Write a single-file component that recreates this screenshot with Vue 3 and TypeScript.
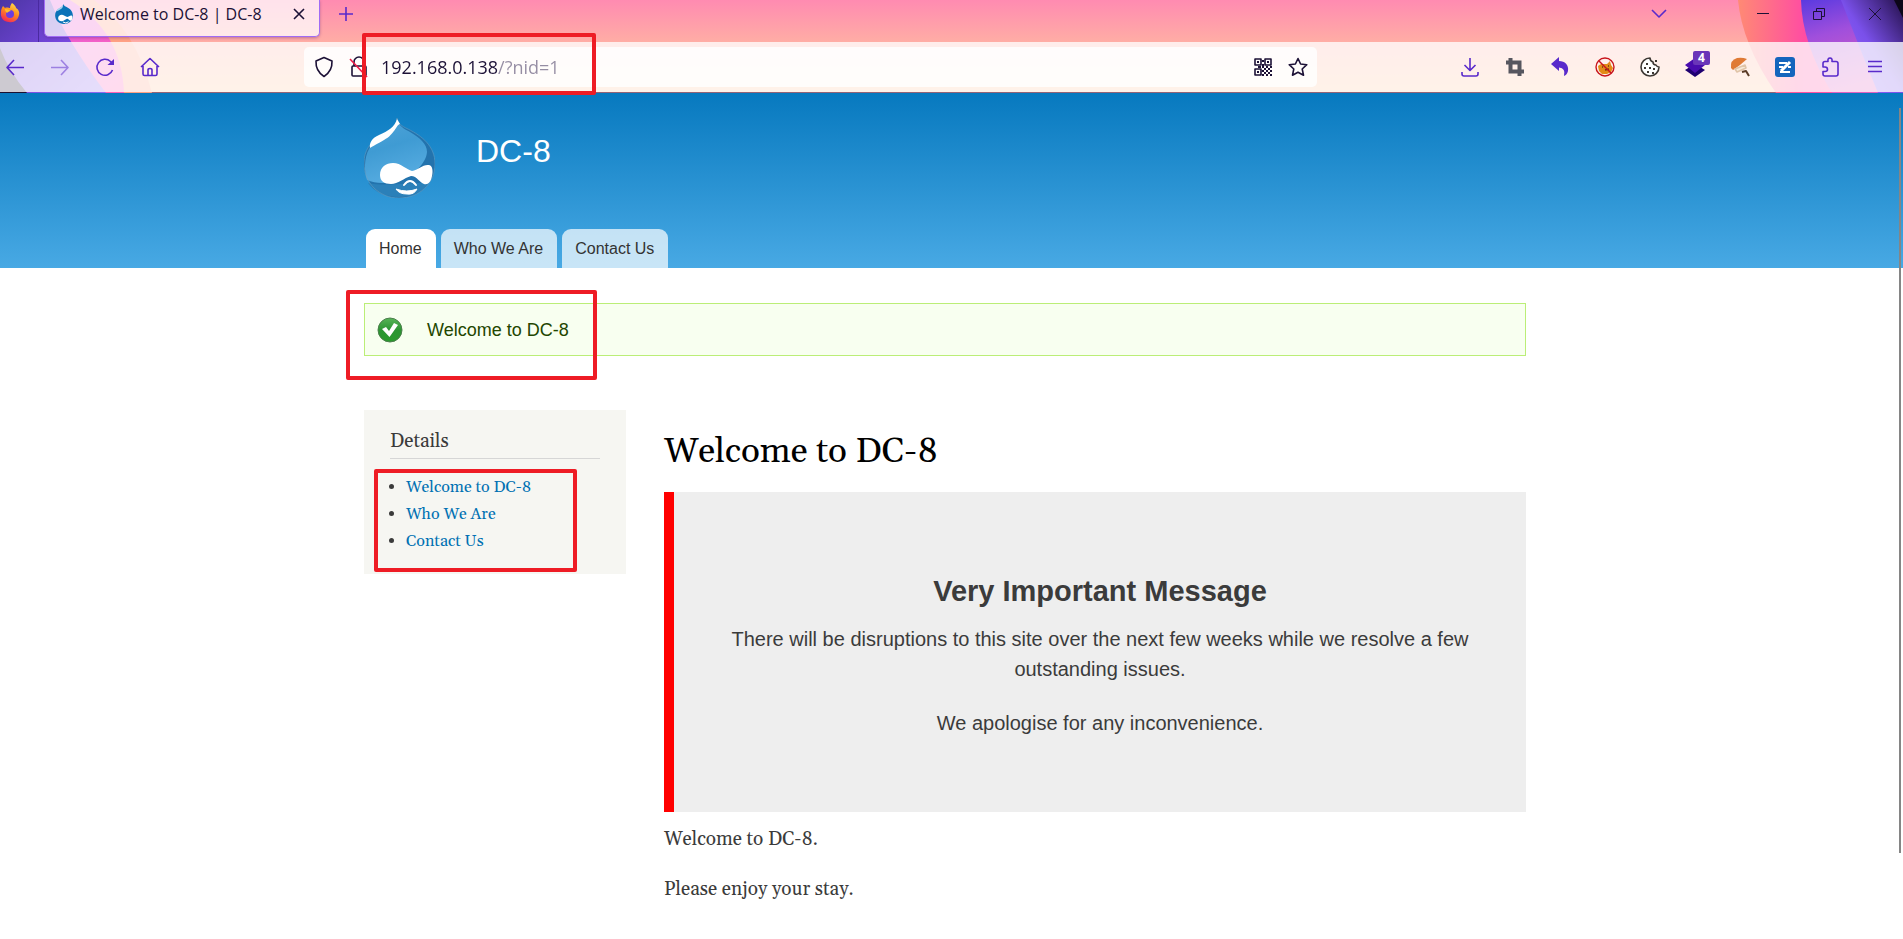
<script setup lang="ts">
import { ref } from 'vue'

interface NavItem {
  label: string
  href: string
}

const address = ref('192.168.0.138/?nid=1')
const active = ref('Home')

const tabs: NavItem[] = [
  { label: 'Home', href: '#home' },
  { label: 'Who We Are', href: '#who' },
  { label: 'Contact Us', href: '#contact' },
]

const details: NavItem[] = [
  { label: 'Welcome to DC-8', href: '#welcome' },
  { label: 'Who We Are', href: '#who' },
  { label: 'Contact Us', href: '#contact' },
]
</script>

<template>
  <div class="window">
    <header class="chrome">
      <svg class="art art-left" width="180" height="93" viewBox="0 0 180 93" aria-hidden="true">
        <defs>
          <linearGradient id="lp" x1="0" y1="0" x2="1" y2="1">
            <stop offset="0" stop-color="#4c35a4" />
            <stop offset=".5" stop-color="#7547dd" />
            <stop offset="1" stop-color="#8f6af0" />
          </linearGradient>
          <linearGradient id="lm" x1="0" y1="0" x2="1" y2="1">
            <stop offset="0" stop-color="#e060e8" />
            <stop offset="1" stop-color="#ff62b4" />
          </linearGradient>
        </defs>
        <path d="M0 0H94Q136 30 152 93H0Z" fill="#ffa184" />
        <path d="M0 0H70Q122 32 124 93H0Z" fill="url(#lm)" />
        <path d="M0 0H50Q66 40 106 93H0Z" fill="url(#lp)" />
        <path d="M0 48Q8 70 27 93H0Z" fill="#1c1030" />
        <path d="M38.5 0V42" stroke="#4a2aa0" />
      </svg>
      <svg class="art art-right" width="183" height="93" viewBox="0 0 183 93" aria-hidden="true">
        <defs>
          <linearGradient id="ro" x1="0" x2="1">
            <stop offset="0" stop-color="#ff8a74" />
            <stop offset=".4" stop-color="#ff4da2" />
            <stop offset="1" stop-color="#ff5fb0" />
          </linearGradient>
          <linearGradient id="rp" x1="0" y1="0" x2=".3" y2="1">
            <stop offset="0" stop-color="#5a3ae0" />
            <stop offset=".4" stop-color="#a04fdc" />
            <stop offset="1" stop-color="#e060c0" />
          </linearGradient>
          <linearGradient id="rv" x1="0" y1="1" x2="1" y2="0">
            <stop offset="0" stop-color="#9a6bff" />
            <stop offset=".5" stop-color="#7a50ea" />
            <stop offset="1" stop-color="#24104a" />
          </linearGradient>
        </defs>
        <path d="M18 0Q22 44 56 93H183V0Z" fill="url(#ro)" />
        <path d="M81 0Q82 44 112 93H183V0Z" fill="url(#rp)" />
        <path d="M121 0Q138 44 158 93H183V0Z" fill="url(#rv)" />
        <path d="M174 0Q179 10 183 18V0Z" fill="#0c0618" />
      </svg>

      <div class="strip">
        <button class="fx" type="button" aria-label="Firefox View">
          <svg width="20" height="20" viewBox="0 0 20 20">
            <defs>
              <linearGradient id="ff" x1=".8" y1="0" x2=".3" y2="1">
                <stop offset="0" stop-color="#ffe14a" />
                <stop offset=".5" stop-color="#ff8a1e" />
                <stop offset="1" stop-color="#f0255a" />
              </linearGradient>
            </defs>
            <path d="M12 0C15 2 16 4 16 5C18 6 20 9 19 12C18 17 14 20 9 19C4 19 0 15 1 9C1 6 2 5 3 3L5 5C7 4 9 5 10 5C10 3 11 1 12 0Z" fill="url(#ff)" />
            <circle cx="10" cy="11" r="4" fill="#6b3de0" />
            <path d="M5 6C8 6 10 7 11 8C9 8 8 9 7 10C6 9 5 8 5 6Z" fill="#ffbd2e" />
          </svg>
        </button>
        <div class="tab">
          <svg class="favicon" width="18" height="20" viewBox="0 0 71 80" aria-hidden="true">
            <path d="M33 0C34 5 37 8 44 11C58 18 71 28 71 46C71 66 55 80 35 80C15 80 0 65 0 45C0 32 7 24 15 19C24 14 32 10 33 0Z" fill="#0b73b8" />
            <path d="M32 5C32 12 28 18 20 22C13 26 9 28 6 30C5 25 8 20 15 17C22 13 29 10 32 5Z" fill="#a9d4ee" />
            <path d="M12 57C12 48 20 42 28 43C37 44 43 51 48 52C54 51 60 44 66 46C70 48 70 54 68 60C66 68 60 68 56 64C52 60 50 58 47 59C40 62 34 69 26 69C18 69 12 65 12 57Z" fill="#fff" />
            <path d="M31 72Q43 80 54 71" stroke="#fff" stroke-width="4" fill="none" />
          </svg>
          <span class="tab-title">Welcome to DC-8 | DC-8</span>
          <button class="plain tab-close" type="button" aria-label="Close tab">
            <svg width="12" height="12" viewBox="0 0 12 12"><path d="M1 1L11 11M11 1L1 11" /></svg>
          </button>
        </div>
        <button class="plain new-tab" type="button" aria-label="New tab">
          <svg width="16" height="16" viewBox="0 0 16 16"><path d="M8 1V15M1 8H15" /></svg>
        </button>
        <div class="grow"></div>
        <button class="plain list-tabs" type="button" aria-label="List all tabs">
          <svg width="16" height="16" viewBox="0 0 16 16"><path d="M1 4L8 11L15 4" /></svg>
        </button>
        <div class="win">
          <button class="plain" type="button" aria-label="Minimize">
            <svg width="14" height="14" viewBox="0 0 14 14"><path d="M1 6.5H13" /></svg>
          </button>
          <button class="plain" type="button" aria-label="Restore">
            <svg width="14" height="14" viewBox="0 0 14 14"><path d="M1.500 4.500H9.500V12.500H1.500ZM4.500 4.500V1.500H12.500V9.500H9.500" /></svg>
          </button>
          <button class="plain" type="button" aria-label="Close">
            <svg width="14" height="14" viewBox="0 0 14 14"><path d="M1 1L13 13M13 1L1 13" /></svg>
          </button>
        </div>
      </div>

      <div class="toolbar">
        <div class="group">
          <button class="tool" type="button" aria-label="Back">
            <svg width="20" height="20" viewBox="0 0 20 20"><path d="M2 10.500H19M9 3L2 10.500L9 18" /></svg>
          </button>
          <button class="tool faded" type="button" aria-label="Forward">
            <svg width="20" height="20" viewBox="0 0 20 20"><path d="M1 10.500H18M11 3L18 10.500L11 18" /></svg>
          </button>
          <button class="tool" type="button" aria-label="Reload">
            <svg width="20" height="20" viewBox="0 0 20 20"><path d="M17.500 13A8 8 0 1 1 15.500 4.500L18 7" /><path d="M19 2V8H12.500Z" class="solid" /></svg>
          </button>
          <button class="tool" type="button" aria-label="Home">
            <svg width="20" height="20" viewBox="0 0 20 20"><path d="M1 10L10 1.500L19 10M3 9V17Q3 18.500 4.500 18.500H15.500Q17 18.500 17 17V9M8 18V13Q8 11.500 10 11.500Q12 11.500 12 13V18" /></svg>
          </button>
        </div>

        <div class="urlbar">
          <svg class="shield" width="20" height="22" viewBox="0 0 20 22" aria-hidden="true"><path d="M10 1.500L18 5Q18.500 15 10 20.500Q1.500 15 2 5Z" /></svg>
          <svg class="lock" width="20" height="22" viewBox="0 0 20 22" aria-hidden="true">
            <path d="M5 10V6A5 5 0 0 1 15 6V10M4 10H16Q17 10 17 11V19Q17 20 16 20H4Q3 20 3 19V11Q3 10 4 10Z" />
            <path d="M1 3L18 21" class="slash" />
          </svg>
          <input v-model="address" class="address" type="text" aria-label="Address" spellcheck="false" />
          <button class="plain ink" type="button" aria-label="QR code">
            <svg width="20" height="20" viewBox="0 0 20 20">
              <path d="M2 2H8V8H2ZM12 2H18V8H12ZM2 12H8V18H2Z" />
              <path class="solid" d="M4 4h2v2H4ZM14 4h2v2h-2ZM4 14h2v2H4ZM9 3h2v2H9ZM9 7h2v4H9ZM5 9h3v2H5ZM11 11h2v2h-2ZM15 11h2v2h-2ZM13 13h2v2h-2ZM17 13h2v2h-2ZM11 15h2v2h-2ZM15 15h2v2h-2ZM13 17h2v2h-2ZM17 17h2v2h-2ZM13 9h2v2h-2ZM17 9h2v2h-2ZM9 13h2v2H9ZM9 17h2v2H9Z" />
            </svg>
          </button>
          <button class="plain ink" type="button" aria-label="Bookmark">
            <svg width="20" height="20" viewBox="0 0 20 20"><path d="M10 1.500L12.600 7L18.800 7.700L14.200 12L15.500 18.200L10 15.200L4.500 18.200L5.800 12L1.200 7.700L7.400 7Z" /></svg>
          </button>
          <div class="mark mark-url" aria-hidden="true"></div>
        </div>

        <div class="group">
          <button class="tool" type="button" aria-label="Downloads">
            <svg width="20" height="20" viewBox="0 0 20 20"><path d="M10 1V13M4.500 8L10 13.500L15.500 8M2 15V17Q2 19 4 19H16Q18 19 18 17V15" /></svg>
          </button>
          <button class="tool" type="button" aria-label="Screenshot">
            <svg width="20" height="20" viewBox="0 0 20 20"><path d="M5.500 1V14.500H19M1 5.500H14.500V19" class="crop" /></svg>
          </button>
          <button class="tool" type="button" aria-label="Undo">
            <svg width="20" height="20" viewBox="0 0 20 20"><path d="M1 7L9 0V4C15 4 19 8 18 14Q17 18 14 19Q16 11 9 10.500V14Z" class="solid" /></svg>
          </button>
          <button class="tool" type="button" aria-label="Blocker">
            <svg width="20" height="20" viewBox="0 0 20 20">
              <path d="M3 9L6 7L12 7L15 4L16 8L18 11L16 15L12 17H7L4 14Z" fill="#e38a17" stroke="none" />
              <path d="M7 10h1M13 9h1M10 13L14 12" stroke="#6b3b0a" />
              <circle cx="10" cy="10" r="9" class="ban" /><path d="M4 4L16 16" class="ban" />
            </svg>
          </button>
          <button class="tool" type="button" aria-label="Cookies">
            <svg width="20" height="20" viewBox="0 0 20 20">
              <path d="M10 1A9 9 0 1 0 19 10Q17 10 16 8Q13 8 13 5Q10 4 10 1Z" fill="#fff" stroke="#3d3733" />
              <path d="M6 6h2v2H6ZM4 10h2v2H4ZM9 10h2v2H9ZM7 14h2v2H7ZM13 11h2v2h-2ZM12 15h2v2h-2ZM15 3h2v2h-2Z" fill="#3d3733" stroke="none" />
            </svg>
          </button>
          <button class="tool" type="button" aria-label="Layers, 4 items">
            <svg width="20" height="20" viewBox="0 0 20 20">
              <path d="M0 13L10 7L20 13L10 20Z" fill="#1e0070" stroke="none" />
              <path d="M0 8L10 1L20 8L10 16Z" fill="#4a0cae" stroke="none" />
            </svg>
            <span class="badge">4</span>
          </button>
          <button class="tool" type="button" aria-label="Painter">
            <svg width="20" height="20" viewBox="0 0 20 20">
              <path d="M1 11Q0 3 7 1Q12 0 17 2L10 8L3 13Z" fill="#df7a35" stroke="none" />
              <path d="M5 12L15 8L16 11L7 15Z" fill="#f7ead9" stroke="#e0c4a8" />
              <path d="M12 15L16 14L19 19" stroke="#5a3b26" stroke-width="2" />
            </svg>
          </button>
          <button class="tool" type="button" aria-label="Notes">
            <svg width="20" height="20" viewBox="0 0 20 20">
              <rect width="20" height="20" rx="3" fill="#1465bd" stroke="none" />
              <path d="M4 6H12M4 10H8M5 15H15M13 10H16" stroke="#fff" stroke-width="2" />
              <path d="M6 14L15 5" stroke="#fff" stroke-width="3" />
            </svg>
          </button>
          <button class="tool" type="button" aria-label="Extensions">
            <svg width="20" height="20" viewBox="0 0 20 20"><path d="M8 4.500Q7.500 1 10 1Q12.500 1 12 4.500H16Q18 4.500 18 6.500V17Q18 19 16 19H5Q3 19 3 17V14.500H5Q7.500 14.500 7.500 12.500Q7.500 10 5 10H3V6.500Q3 4.500 5 4.500Z" /></svg>
          </button>
          <button class="tool" type="button" aria-label="Menu">
            <svg width="20" height="20" viewBox="0 0 20 20"><path d="M3 4.500H17M3 9.500H17M3 14.500H17" /></svg>
          </button>
        </div>
      </div>
    </header>

    <main class="page">
      <div class="banner">
        <div class="wrap">
          <div class="brand">
            <svg class="logo" width="71" height="80" viewBox="0 0 71 80" aria-label="Drupal" role="img">
              <defs>
                <linearGradient id="drop" x1="0" y1="0" x2=".3" y2="1">
                  <stop offset="0" stop-color="#4fa3d8" />
                  <stop offset=".5" stop-color="#3f9bd3" />
                  <stop offset="1" stop-color="#55abe0" />
                </linearGradient>
              </defs>
              <path d="M33 0C34 5 37 8 44 11C58 18 71 28 71 46C71 66 55 80 35 80C15 80 0 65 0 45C0 32 7 24 15 19C24 14 32 10 33 0Z" fill="#2373ad" />
              <path d="M33 1C35 8 40 11 46 14C56 20 63 26 63 34C62 46 50 56 36 62C24 66 12 66 3 62C0 54 0 40 5 31C10 22 20 20 26 15C31 11 32 7 33 1Z" fill="url(#drop)" />
              <path d="M4 65C16 68 40 66 66 64C60 74 48 79 35 79C22 79 10 74 4 65Z" fill="#2b80b9" />
              <path d="M33 0C34 5 37 8 44 11C58 18 71 28 71 46C71 66 55 80 35 80C15 80 0 65 0 45C0 32 7 24 15 19C24 14 32 10 33 0Z" fill="none" stroke="#6f9fc0" stroke-opacity=".5" />
              <path d="M33 1L36 6C32 7 31 16 20 22C13 26 9 28 6 30C5 25 8 20 15 17C24 13 31 9 33 1Z" fill="#fff" />
              <path d="M16 57C16 49 22 45 29 45C37 45 43 52 48 53C54 52 59 46 65 47C69 48 69 54 68 58C67 64 64 67 60 66C56 65 53 58 47 58C40 60 34 66 27 66C20 66 16 63 16 57Z" fill="#fff" />
              <path d="M40 67Q46 59 52 67" stroke="#fff" stroke-width="2" fill="none" stroke-linecap="round" />
              <path d="M32 71Q43 75 53 71Q50 77 43 76Q35 76 32 71Z" fill="#fff" stroke="#fff" stroke-linejoin="round" />
            </svg>
            <a class="site-name" href="#home">DC-8</a>
          </div>
          <nav class="nav" aria-label="Main menu">
            <a
              v-for="t in tabs"
              :key="t.label"
              :href="t.href"
              :class="['nav-link', { on: t.label === active }]"
              @click.prevent="active = t.label"
            >{{ t.label }}</a>
          </nav>
        </div>
      </div>

      <div class="body">
        <div class="wrap">
          <div class="status" role="status">
            <svg width="26" height="26" viewBox="0 0 26 26" aria-hidden="true">
              <defs>
                <linearGradient id="ok" x1="0" y1="0" x2="0" y2="1">
                  <stop offset="0" stop-color="#57b457" />
                  <stop offset=".5" stop-color="#2c9433" />
                  <stop offset="1" stop-color="#2a9a2c" />
                </linearGradient>
              </defs>
              <circle cx="13" cy="13" r="12" fill="url(#ok)" stroke="#4c7f4c" />
              <path d="M5 12L9 10L12 14L17 6L21 8L12.500 20Z" fill="#fff" />
            </svg>
            <span>Welcome to DC-8</span>
            <div class="mark mark-status" aria-hidden="true"></div>
          </div>

          <div class="columns">
            <aside class="side">
              <h2>Details</h2>
              <ul>
                <li v-for="d in details" :key="d.label"><a :href="d.href">{{ d.label }}</a></li>
              </ul>
              <div class="mark mark-list" aria-hidden="true"></div>
            </aside>
            <article class="content">
              <h1>Welcome to DC-8</h1>
              <section class="notice">
                <h2>Very Important Message</h2>
                <p>There will be disruptions to this site over the next few weeks while we resolve a few outstanding issues.</p>
                <p>We apologise for any inconvenience.</p>
              </section>
              <p>Welcome to DC-8.</p>
              <p>Please enjoy your stay.</p>
            </article>
          </div>
        </div>
      </div>
      <div class="thumb" aria-hidden="true"></div>
    </main>
  </div>
</template>

<style>
body {
  margin: 0;
}
</style>

<style scoped>
.window {
  display: flex;
  flex-direction: column;
  min-height: 100vh;
  background: #fff;
}
.window * {
  box-sizing: border-box;
}

/* Browser chrome */
.chrome {
  position: relative;
  z-index: 1;
  border-bottom: 1px solid rgba(40, 60, 60, 0.5);
  background: linear-gradient(#ff8bb1, #ffada5 42px, #ffc59a);
  color: #1c1136;
  font-family: "Segoe UI", "Open Sans", "Noto Sans", sans-serif;
}
.art {
  position: absolute;
  top: 0;
}
.art-left {
  left: 0;
}
.art-right {
  right: 0;
}
button {
  display: flex;
  align-items: center;
  justify-content: center;
  border: 0;
  padding: 0;
  background: none;
  font: inherit;
  color: inherit;
}
.chrome button svg,
.shield,
.lock {
  display: block;
  flex: none;
  fill: none;
  stroke: currentColor;
  stroke-width: 1.6;
  stroke-linejoin: round;
}
.chrome .fx svg {
  stroke: none;
}
.chrome .solid {
  fill: currentColor;
  stroke: none;
}
.strip {
  position: relative;
  display: flex;
  height: 42px;
}
.fx {
  width: 20px;
  height: 26px;
  margin-right: 24px;
}
.tab {
  display: flex;
  align-items: center;
  width: 276px;
  height: 37px;
  padding: 0 14px 8px 10px;
  border: 1px solid #a06cf5;
  border-top: 0;
  border-radius: 0 0 5px 5px;
  background: rgba(255, 255, 255, 0.75);
  box-shadow: 0 1px 3px rgba(90, 40, 120, 0.4);
  font-size: 16px;
}
.favicon {
  flex: none;
  margin-right: 7px;
}
.tab-title {
  flex: 1;
  white-space: nowrap;
}
.chrome .win svg {
  stroke-width: 1;
}
.new-tab {
  width: 30px;
  height: 27px;
  margin-left: 11px;
  color: #592acb;
}
.grow {
  flex: 1;
}
.list-tabs {
  width: 30px;
  height: 27px;
  margin-right: 61px;
  color: #592acb;
}
.win {
  display: flex;
}
.win button {
  width: 56px;
  height: 28px;
}
.toolbar {
  position: relative;
  display: flex;
  align-items: center;
  height: 50px;
  padding-right: 13px;
  background: rgba(255, 255, 255, 0.78);
}
.group {
  display: flex;
  gap: 15px;
}
.tool {
  position: relative;
  width: 30px;
  height: 30px;
  color: #592acb;
}
.faded {
  opacity: 0.5;
}
.chrome .crop {
  stroke: #56565f;
  stroke-width: 4;
  stroke-linejoin: miter;
}
.chrome .ban {
  stroke: #c8141c;
  stroke-width: 1.4;
}
.badge {
  position: absolute;
  top: -1px;
  right: 0;
  width: 17px;
  height: 14px;
  border-radius: 2px;
  background: #6a35b8;
  color: #fff;
  font: bold 12px/14px "Open Sans", sans-serif;
  text-align: center;
}
.urlbar {
  position: relative;
  display: flex;
  flex: 1;
  align-items: center;
  height: 40px;
  margin: 0 138px 0 139px;
  padding: 0 9px 0 10px;
  border-radius: 5px;
  background: rgba(255, 255, 255, 0.82);
}
.lock {
  margin: 0 12px 0 15px;
}
.lock .slash {
  stroke: #f01c48;
}
.address {
  flex: 1;
  min-width: 0;
  height: 30px;
  border: 0;
  padding: 0;
  outline: 0;
  background: linear-gradient(90deg, #1c1136 117px, #958da3 117px);
  background-clip: text;
  -webkit-background-clip: text;
  color: transparent;
  font: 18px/30px "Segoe UI", "Open Sans", "Noto Sans", sans-serif;
}
.ink {
  width: 20px;
  margin-left: 15px;
}

/* Rectangles drawn over the window */
.mark {
  position: absolute;
  border: 4px solid #ee1c25;
  border-radius: 2px;
  pointer-events: none;
}
.mark-url {
  top: -14px;
  left: 58px;
  width: 234px;
  height: 62px;
}
.mark-status {
  top: -14px;
  left: -19px;
  width: 251px;
  height: 90px;
}
.mark-list {
  right: 49px;
  bottom: 2px;
  left: 10px;
  height: 103px;
}

/* Site */
.page {
  position: relative;
  flex: 1;
  color: #3b3b3b;
  font-family: Georgia, Gelasio, "Liberation Serif", serif;
}
.thumb {
  position: absolute;
  top: 15px;
  right: 2px;
  bottom: 86px;
  width: 2px;
  background: #858585;
}
.banner,
.body {
  padding-right: 13px;
}
.banner {
  background: linear-gradient(#0779bf, #48a9e4);
}
.wrap {
  width: calc(100% - 40px);
  max-width: 1162px;
  margin: 0 auto;
}
.brand {
  display: flex;
  height: 136px;
  padding-top: 25px;
}
.logo {
  flex: none;
}
.site-name {
  margin: 13px 0 0 41px;
  color: #fff;
  font: 32px/40px Arial, "Liberation Sans", sans-serif;
  text-decoration: none;
}
.nav {
  display: flex;
  gap: 5px;
  padding-left: 2px;
}
.nav-link {
  padding: 0 14px 0 13px;
  border-radius: 9px 9px 0 0;
  background: rgba(255, 255, 255, 0.7);
  color: #333;
  font: 16px/39px Arial, "Liberation Sans", sans-serif;
  text-decoration: none;
}
.nav-link.on {
  background: #fff;
}
.status {
  position: relative;
  display: flex;
  gap: 24px;
  align-items: center;
  height: 53px;
  margin-top: 35px;
  padding-left: 12px;
  border: 1px solid #be7;
  background: #f8fff0;
  color: #234600;
  font: 18px/26px Arial, "Liberation Sans", sans-serif;
}
.columns {
  display: flex;
  gap: 38px;
  align-items: flex-start;
  margin-top: 54px;
}
.side {
  position: relative;
  flex: none;
  width: 262px;
  padding: 16px 26px 19px;
  background: #f6f6f2;
}
.side h2 {
  margin: 0 0 15px;
  padding-bottom: 2px;
  border-bottom: 1px solid #d6d6d6;
  font-size: 19px;
  font-weight: 400;
  line-height: 30px;
}
.side ul {
  margin: 0;
  padding: 0 0 0 16px;
}
.side li {
  padding: 2px 0;
  font-size: 16px;
  line-height: 23px;
}
.side a {
  color: #0071b3;
  text-decoration: none;
}
.content {
  flex: 1;
  min-width: 0;
  font-size: 19px;
  line-height: 30px;
}
.content h1 {
  margin: 20px 0 18px;
  color: #000;
  font-size: 35px;
  font-weight: 400;
  line-height: 44px;
}
.content p {
  margin: 0 0 20px;
}
.content p:last-child {
  margin-bottom: 0;
}
.notice {
  margin-bottom: 12px;
  padding: 80px 50px 74px;
  border-left: 10px solid #f00;
  background: #eee;
  font: 20px/30px Arial, "Liberation Sans", sans-serif;
  text-align: center;
}
.notice h2 {
  margin: 0 0 14px;
  font-size: 29px;
  line-height: 38px;
}
.content .notice p + p {
  margin-top: 24px;
}
</style>
